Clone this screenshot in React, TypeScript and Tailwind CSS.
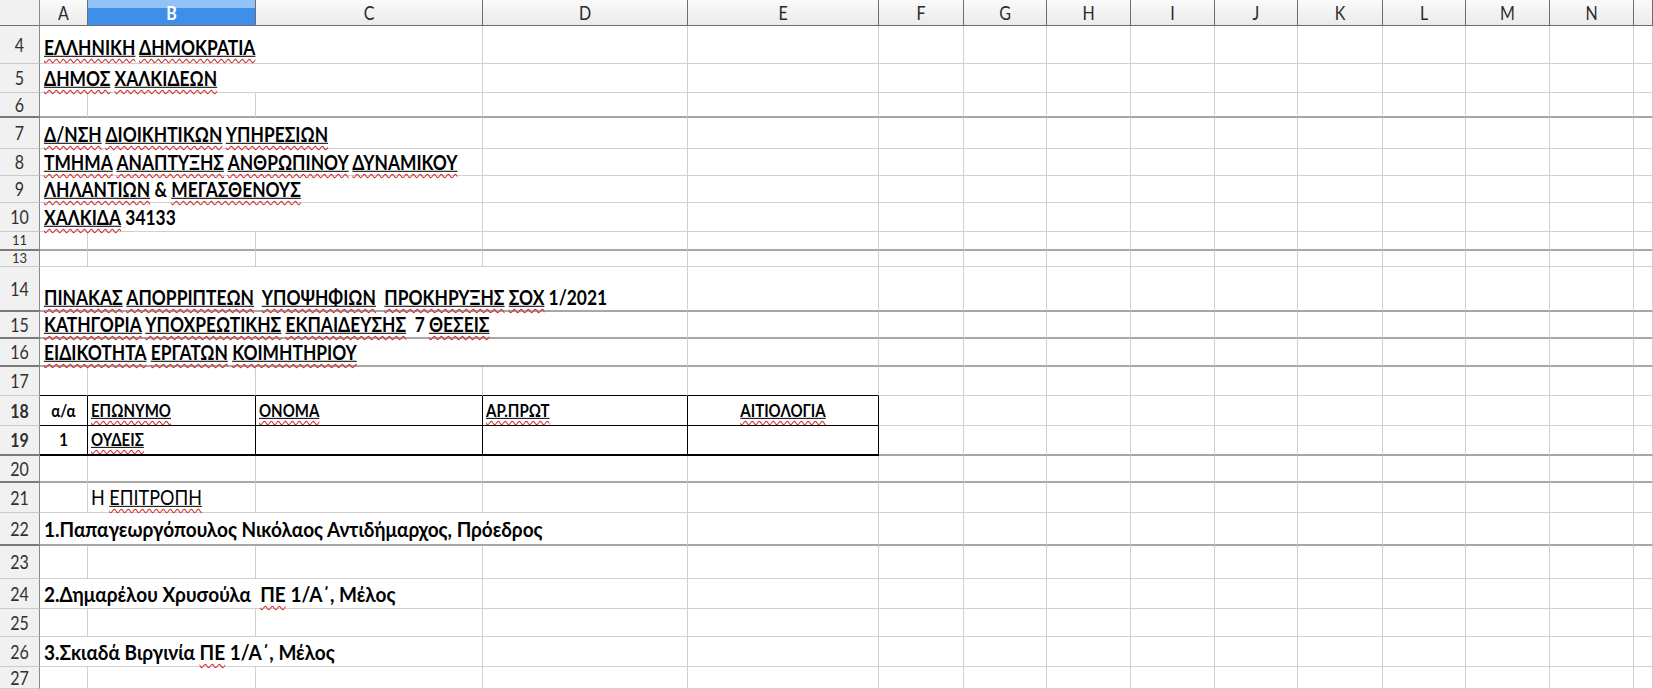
import React from "react";

// column widths: row header, A..N, then a sliver of O
const GRID =
  "grid grid-cols-[40px_48px_168px_227px_205px_191px_85px_83px_84px_84px_83px_85px_83px_84px_84px_19px]";

const COLS = ["A", "B", "C", "D", "E", "F", "G", "H", "I", "J", "K", "L", "M", "N", ""];

const spanCls: { [k: number]: string } = {
  1: "col-span-1",
  2: "col-span-2",
  3: "col-span-3",
  4: "col-span-4",
};

type RowDef = {
  n: string;
  h: string;
  text?: string;
  span?: number;
  pb?: string;
  thick?: boolean;
  lower?: boolean;
  small?: boolean;
};

const rowsTop: RowDef[] = [
  { n: "4", h: "h-[38px]", text: "ΕΛΛΗΝΙΚΗ ΔΗΜΟΚΡΑΤΙΑ", span: 3, pb: "pb-[6px]" },
  { n: "5", h: "h-[29px]", text: "ΔΗΜΟΣ ΧΑΛΚΙΔΕΩΝ", span: 3, pb: "pb-[4px]" },
  { n: "6", h: "h-[25px]", thick: true },
  { n: "7", h: "h-[31px]", text: "Δ/ΝΣΗ ΔΙΟΙΚΗΤΙΚΩΝ ΥΠΗΡΕΣΙΩΝ", span: 3, pb: "pb-[4px]" },
  { n: "8", h: "h-[27px]", text: "ΤΜΗΜΑ ΑΝΑΠΤΥΞΗΣ ΑΝΘΡΩΠΙΝΟΥ ΔΥΝΑΜΙΚΟΥ", span: 3, pb: "pb-[3px]" },
  { n: "9", h: "h-[27px]", text: "ΛΗΛΑΝΤΙΩΝ & ΜΕΓΑΣΘΕΝΟΥΣ", span: 3, pb: "pb-[3px]" },
  { n: "10", h: "h-[29px]", text: "ΧΑΛΚΙΔΑ 34133", span: 3, pb: "pb-[4px]" },
  { n: "11", h: "h-[19px]", thick: true, small: true },
  { n: "13", h: "h-[16px]", small: true },
  {
    n: "14",
    h: "h-[45px]",
    text: "ΠΙΝΑΚΑΣ ΑΠΟΡΡΙΠΤΕΩΝ  ΥΠΟΨΗΦΙΩΝ  ΠΡΟΚΗΡΥΞΗΣ ΣΟΧ 1/2021",
    span: 4,
    pb: "pb-[3px]",
    thick: true,
  },
  {
    n: "15",
    h: "h-[27px]",
    text: "ΚΑΤΗΓΟΡΙΑ ΥΠΟΧΡΕΩΤΙΚΗΣ ΕΚΠΑΙΔΕΥΣΗΣ  7 ΘΕΣΕΙΣ",
    span: 4,
    pb: "pb-[3px]",
    thick: true,
  },
  { n: "16", h: "h-[28px]", text: "ΕΙΔΙΚΟΤΗΤΑ ΕΡΓΑΤΩΝ ΚΟΙΜΗΤΗΡΙΟΥ", span: 4, pb: "pb-[3px]", thick: true },
];

const rowsBottom: RowDef[] = [
  {
    n: "22",
    h: "h-[33px]",
    text: "1.Παπαγεωργόπουλος Νικόλαος Αντιδήμαρχος, Πρόεδρος",
    span: 4,
    pb: "pb-[5px]",
    thick: true,
    lower: true,
  },
  { n: "23", h: "h-[33px]" },
  { n: "24", h: "h-[30px]", text: "2.Δημαρέλου Χρυσούλα  ΠΕ 1/Α΄, Μέλος", span: 3, pb: "pb-[4px]", lower: true },
  { n: "25", h: "h-[28px]" },
  { n: "26", h: "h-[30px]", text: "3.Σκιαδά Βιργινία ΠΕ 1/Α΄, Μέλος", span: 3, pb: "pb-[4px]", lower: true },
  { n: "27", h: "h-[22px]" },
];

// words LibreOffice flags with the red squiggle
const Marked = ({ t, plain }: { t: string; plain?: boolean }) => (
  <>
    {t.split(/(\s+)/).map((p, i) =>
      /^[\u0391-\u03A9/.]{2,}$/.test(p) ? (
        <span
          key={i}
          className="underline decoration-wavy decoration-[#d23030] decoration-1 underline-offset-[3px]"
        >
          {plain ? (
            p
          ) : (
            <span className="underline decoration-[#222] decoration-1 underline-offset-[1px]">{p}</span>
          )}
        </span>
      ) : (
        <span key={i}>{p}</span>
      )
    )}
  </>
);

const bottom = (thick?: boolean) =>
  thick ? "border-b-2 border-b-[#a6a6a6]" : "border-b border-b-[#d0d0d0]";

const RowHead = ({ n, thick, small }: { n: string; thick?: boolean; small?: boolean }) => (
  <div
    className={`bg-[#f1f1f1] border-r border-r-[#8a8a8a] flex items-center justify-center leading-none text-[#303030] overflow-hidden ${
      small ? "text-[13px]" : "text-[16px]"
    } ${thick ? "border-b-2 border-b-[#7a7a7a]" : "border-b border-b-[#c9c9c9]"}`}
  >
    <span className={small ? "inline-block" : "inline-block scale-y-[1.2]"}>{n}</span>
  </div>
);

const Blank = ({ thick }: { thick?: boolean }) => (
  <div className={`border-r border-r-[#d0d0d0] ${bottom(thick)}`} />
);

const Blanks = ({ from, thick }: { from: number; thick?: boolean }) => (
  <>
    {COLS.slice(from).map((c, i) => (
      <Blank key={i} thick={thick} />
    ))}
  </>
);

const SheetRow = ({ r }: { r: RowDef }) => {
  const span = r.span || 0;
  return (
    <div className={`${GRID} ${r.h}`}>
      <RowHead n={r.n} thick={r.thick} small={r.small} />
      {r.text ? (
        <div
          className={`${spanCls[span]} border-r border-r-[#d0d0d0] ${bottom(r.thick)} flex items-end pl-[4px] ${r.pb} whitespace-pre font-bold leading-none text-black`}
        >
          {r.lower ? (
            <span className="inline-block origin-bottom scale-y-[1.1] text-[19px]">
              <Marked t={r.text} plain />
            </span>
          ) : (
            <span className="inline-block origin-bottom scale-y-[1.18] text-[17.4px]">
              <Marked t={r.text} />
            </span>
          )}
        </div>
      ) : null}
      <Blanks from={span} thick={r.thick} />
    </div>
  );
};

const TableCell = ({ children, center, last }: { children?: React.ReactNode; center?: boolean; last?: boolean }) => (
  <div
    className={`border-r border-r-black flex items-end pb-[6px] ${center ? "justify-center" : "pl-[3px]"} ${
      last ? "border-b-2 border-b-black" : "border-b border-b-black"
    }`}
  >
    {children ? <span className="inline-block origin-bottom scale-y-[1.15]">{children}</span> : null}
  </div>
);

const App = () => {
  return (
    <div className="w-[1653px] h-[689px] overflow-hidden bg-white font-['Lato','Noto_Sans',sans-serif]">
      {/* column headers */}
      <div className={`${GRID} h-[26px]`}>
        <div className="bg-[#f1f1f1] border-r border-r-[#8a8a8a] border-b border-b-[#6e6e6e]" />
        {COLS.map((c) =>
          c === "B" ? (
            <div
              key={c}
              className="bg-linear-to-b from-[#92c3f7] from-30% to-[#3f8fea] to-30% border-r border-r-[#6e6e6e] border-b border-b-[#6e6e6e] flex items-center justify-center text-white font-bold text-[16px] leading-none"
            >
              <span className="inline-block scale-y-[1.2]">{c}</span>
            </div>
          ) : (
            <div
              key={c}
              className="bg-linear-to-b from-[#fafafa] to-[#ebebeb] border-r border-r-[#6e6e6e] border-b border-b-[#6e6e6e] flex items-center justify-center text-[#2a2a2a] text-[16px] leading-none"
            >
              <span className="inline-block scale-y-[1.2]">{c}</span>
            </div>
          )
        )}
      </div>

      {rowsTop.map((r) => (
        <SheetRow key={r.n} r={r} />
      ))}

      {/* row 17: top edge of the table */}
      <div className={`${GRID} h-[29px]`}>
        <RowHead n="17" />
        <div className="border-r border-r-[#d0d0d0] border-b border-b-black" />
        <div className="border-r border-r-[#d0d0d0] border-b border-b-black" />
        <div className="border-r border-r-[#d0d0d0] border-b border-b-black" />
        <div className="border-r border-r-[#d0d0d0] border-b border-b-black" />
        <div className="border-r border-r-[#d0d0d0] border-b border-b-black" />
        <Blanks from={5} />
      </div>

      {/* row 18: table header */}
      <div className={`${GRID} h-[30px] font-bold text-[15px] leading-none text-black`}>
        <RowHead n="18" />
        <TableCell center>α/α</TableCell>
        <TableCell>
          <Marked t="ΕΠΩΝΥΜΟ" />
        </TableCell>
        <TableCell>
          <Marked t="ΟΝΟΜΑ" />
        </TableCell>
        <TableCell>
          <Marked t="ΑΡ.ΠΡΩΤ" />
        </TableCell>
        <TableCell center>
          <Marked t="ΑΙΤΙΟΛΟΓΙΑ" />
        </TableCell>
        <Blanks from={5} />
      </div>

      {/* row 19 */}
      <div className={`${GRID} h-[30px] font-bold text-[15px] leading-none text-black`}>
        <RowHead n="19" thick />
        <TableCell center last>
          1
        </TableCell>
        <TableCell last>
          <Marked t="ΟΥΔΕΙΣ" />
        </TableCell>
        <TableCell last />
        <TableCell last />
        <TableCell last />
        <Blanks from={5} thick />
      </div>

      <div className={`${GRID} h-[27px]`}>
        <RowHead n="20" thick />
        <Blanks from={0} thick />
      </div>

      {/* row 21: committee title, in column B */}
      <div className={`${GRID} h-[30px]`}>
        <RowHead n="21" />
        <Blank />
        <div className="border-r border-r-[#d0d0d0] border-b border-b-[#d0d0d0] flex items-end pl-[3px] pb-[5px] whitespace-pre text-[18px] leading-none text-black">
          <span className="inline-block origin-bottom scale-y-[1.15]">
            <Marked t="Η ΕΠΙΤΡΟΠΗ" />
          </span>
        </div>
        <Blanks from={2} />
      </div>

      {rowsBottom.map((r) => (
        <SheetRow key={r.n} r={r} />
      ))}
    </div>
  );
};

export default App;
